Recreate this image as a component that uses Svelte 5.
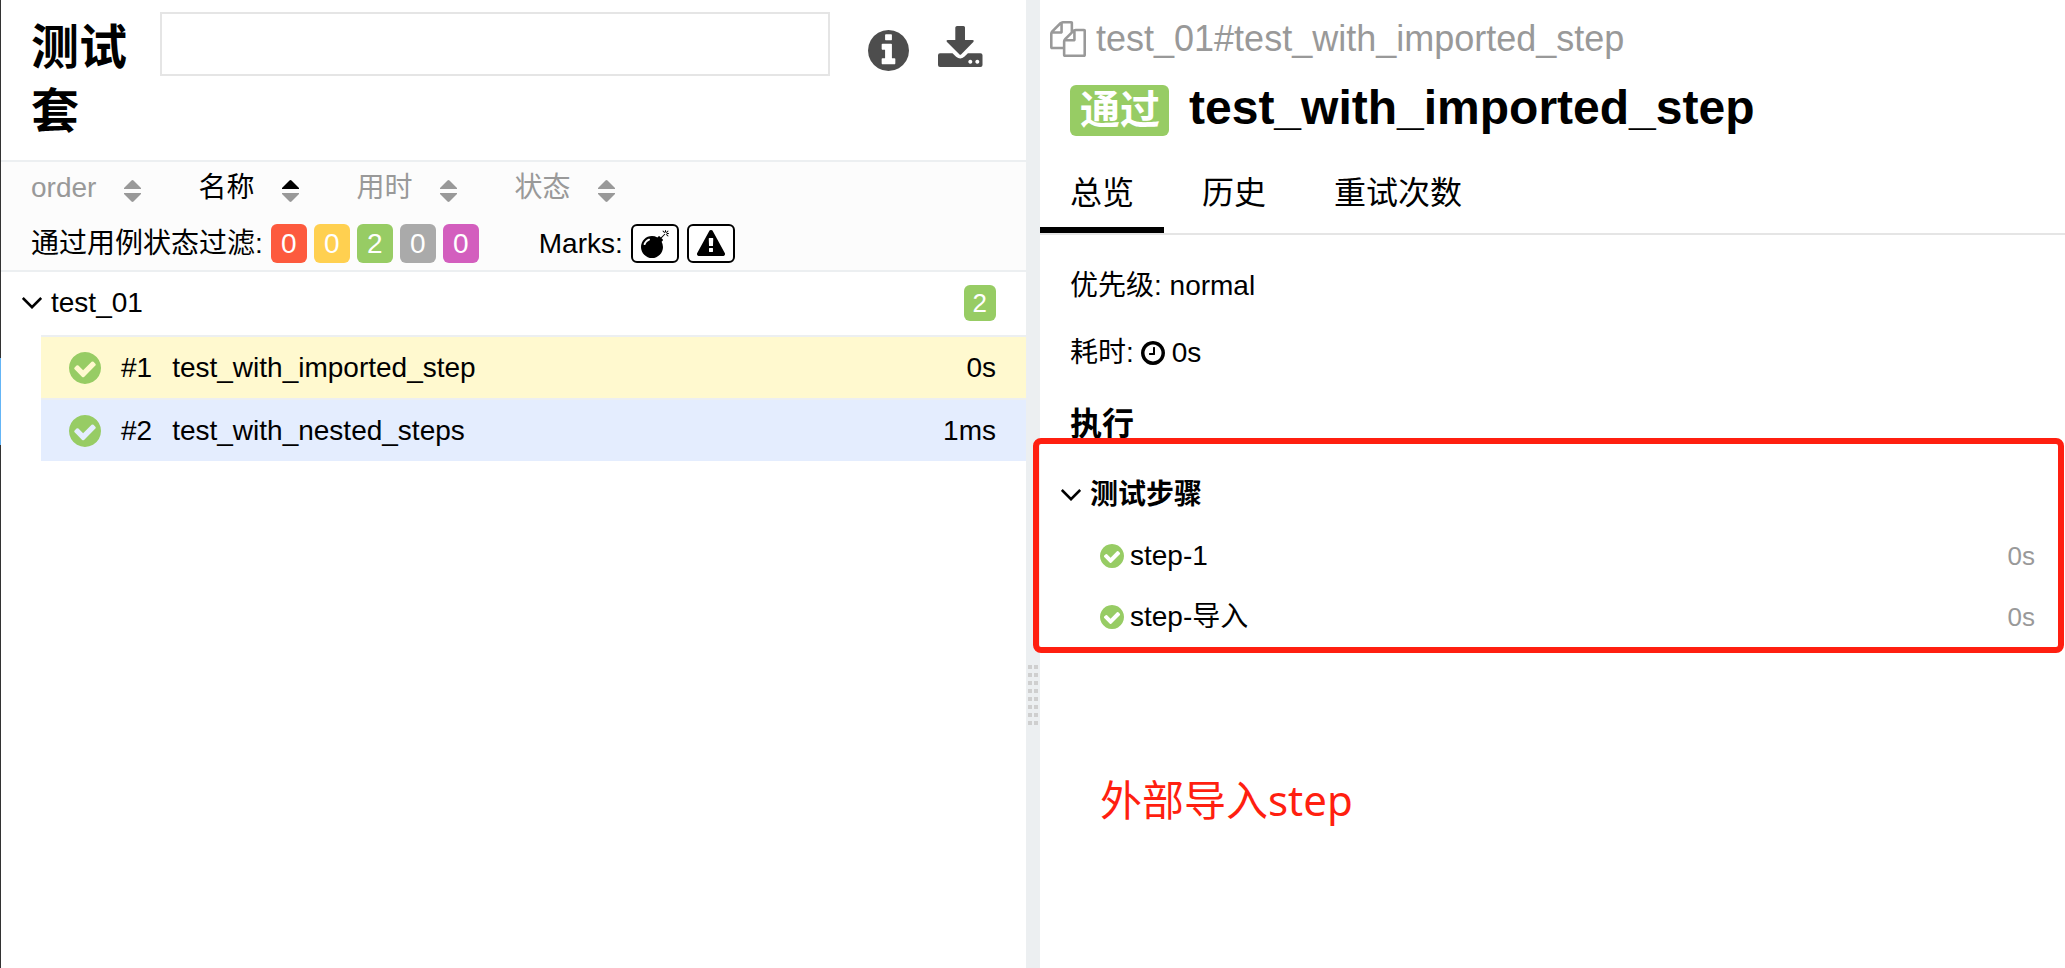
<script>
	const CIRCLE = 'q0 209-103 385.5t-279.5 279.5-385.5 103-385.5-103-279.5-279.5-103-385.5 103-385.5 279.5-279.5 385.5-103 385.5 103 279.5 279.5 103 385.5z';

	const icons = {
		info: 'M1152 1376v-160q0-14-9-23t-23-9h-96v-512q0-14-9-23t-23-9h-320q-14 0-23 9t-9 23v160q0 14 9 23t23 9h96v320h-96q-14 0-23 9t-9 23v160q0 14 9 23t23 9h448q14 0 23-9t9-23zm-128-896v-160q0-14-9-23t-23-9h-192q-14 0-23 9t-9 23v160q0 14 9 23t23 9h192q14 0 23-9t9-23zm640 416' + CIRCLE,
		check: 'M1412 734q0-28-18-46l-91-90q-19-19-45-19t-45 19l-408 407-226-226q-19-19-45-19t-45 19l-91 90q-18 18-18 46 0 27 18 45l362 362q19 19 45 19 27 0 46-19l543-543q18-18 18-45zm252 162' + CIRCLE,
		clock: 'M1024 544v448q0 14-9 23t-23 9h-320q-14 0-23-9t-9-23v-64q0-14 9-23t23-9h224v-352q0-14 9-23t23-9h64q14 0 23 9t9 23zm416 352q0-148-73-273t-198-198-273-73-273 73-198 198-73 273 73 273 198 198 273 73 273-73 198-198 73-273zm224 0' + CIRCLE,
		copy: 'M1696 384q40 0 68 28t28 68v1216q0 40-28 68t-68 28h-960q-40 0-68-28t-28-68v-288h-544q-40 0-68-28t-28-68v-672q0-40 20-88t48-76l408-408q28-28 76-48t88-20h416q40 0 68 28t28 68v328q68-40 128-40h416zm-544 213l-299 299h299v-299zm-640-384l-299 299h299v-299zm196 647l316-316v-416h-384v416q0 40-28 68t-68 28h-416v640h512v-256q0-40 20-88t48-76zm956 804v-1152h-384v416q0 40-28 68t-68 28h-416v640h896z'
	};

	const marks = [
		{
			label: 'flaky',
			path: 'M571 589q-10-25-34-35t-49 0q-108 44-191 127t-127 191q-10 25 0 49t35 34q13 5 24 5 42 0 60-40 34-84 98.5-148.5t148.5-98.5q25-11 35-35t0-49zm942-356l46 46-244 243 68 68q19 19 19 45.5t-19 45.5l-64 64q89 161 89 343 0 143-55.5 273.5t-150 225-225 150-273.5 55.5-273.5-55.5-225-150-150-225-55.5-273.5 55.5-273.5 150-225 225-150 273.5-55.5q182 0 343 89l64-64q19-19 45.5-19t45.5 19l68 68zm8-56q-10 10-22 10-13 0-23-10l-91-90q-9-10-9-23t9-23q10-9 23-9t23 9l90 91q10 9 10 22.5t-10 22.5zm230 230q-11 9-23 9t-23-9l-90-91q-10-9-10-22.5t10-22.5q9-10 22.5-10t22.5 10l91 90q9 10 9 23t-9 23zm41-183q0 14-9 23t-23 9h-96q-14 0-23-9t-9-23 9-23 23-9h96q14 0 23 9t9 23zm-192-192v96q0 14-9 23t-23 9-23-9-9-23v-96q0-14 9-23t23-9 23 9 9 23zm151 55l-91 90q-10 10-22 10-13 0-23-10-10-9-10-22.5t10-22.5l90-91q10-9 23-9t23 9q9 10 9 23t-9 23z'
		},
		{
			label: 'new failed',
			path: 'M1024 1375v-190q0-14-9.5-23.5t-22.5-9.5h-192q-13 0-22.5 9.5t-9.5 23.5v190q0 14 9.5 23.5t22.5 9.5h192q13 0 22.5-9.5t9.5-23.5zm-2-374l18-459q0-12-10-19-13-11-24-11h-220q-11 0-24 11-10 7-10 21l17 457q0 10 10 16.5t24 6.5h185q14 0 23.5-6.5t10.5-16.5zm-14-934l768 1408q35 63-2 126-17 29-46.5 46t-63.5 17h-1536q-34 0-63.5-17t-46.5-46q-37-63-2-126l768-1408q17-31 47-49t65-18 65 18 47 49z'
		}
	];

	const sorters = ['order', '名称', '用时', '状态'];
	const statuses = [
		{ name: 'failed', count: 0 },
		{ name: 'broken', count: 0 },
		{ name: 'passed', count: 2 },
		{ name: 'skipped', count: 0 },
		{ name: 'unknown', count: 0 }
	];
	const tests = [
		{ order: 1, name: 'test_with_imported_step', time: '0s' },
		{ order: 2, name: 'test_with_nested_steps', time: '1ms' }
	];
	const tabs = ['总览', '历史', '重试次数'];
	const steps = [
		{ name: 'step-1', time: '0s' },
		{ name: 'step-导入', time: '0s' }
	];

	let query = $state('');
	let sortBy = $state('名称');
	let selected = $state(1);
	let activeTab = $state('总览');
</script>

{#snippet icon(path, cls)}
	<svg class={cls} viewBox="128 128 1536 1536" fill="currentColor" aria-hidden="true"><path d={path} /></svg>
{/snippet}

{#snippet chevron()}
	<svg class="chevron" viewBox="0 0 20 12" fill="none" stroke="currentColor" stroke-width="2.6" aria-hidden="true">
		<path d="M0.8 1l9.2 9.2L19.2 1" />
	</svg>
{/snippet}

<main class="report">
	<div class="edge"></div>

	<section class="pane">
		<header class="suites-header">
			<h1>测试套</h1>
			<input type="text" aria-label="搜索" bind:value={query} />
			<div class="tools">
				<button aria-label="info">{@render icon(icons.info, 'info')}</button>
				<button aria-label="download">
					<svg class="download" viewBox="0 0 45 48" fill="currentColor" aria-hidden="true">
						<path d="M19 0h6.500q1.500 0 1.500 1.500V14h7.500q2 .3 .8 1.900L23.300 28.300q-1 1-2 0L9 15.900q-1.200-1.600 .8-1.900h7.500V1.500Q17.500 0 19 0z" />
						<path fill-rule="evenodd" d="M2 27.200h12.500l3.600 3.600q4.200 3.400 8.200 0l3.600-3.600H42.500q2 0 2 2V39q0 2-2 2H2q-2 0-2-2V29.200q0-2 2-2zM32.300 33.800a2 2 0 1 0 .01 0zM39.300 33.800a2 2 0 1 0 .01 0z" />
					</svg>
				</button>
			</div>
		</header>

		<div class="controls">
			<div class="sorters">
				{#each sorters as name}
					<button class="sorter" class:active={sortBy === name} onclick={() => (sortBy = name)}>
						{name}
						<svg class="arrows" viewBox="0 0 17 22" aria-hidden="true">
							<path class="up" d="M0 9v-1L7.500 .4q1-.8 2 0L17 8v1z" />
							<path d="M0 13v1l7.500 7.600q1 .8 2 0L17 14v-1z" />
						</svg>
					</button>
				{/each}
			</div>
			<div class="filters">
				<div class="filter">
					<span>通过用例状态过滤:</span>
					<div class="chips">
						{#each statuses as s}
							<button class="chip {s.name}">{s.count}</button>
						{/each}
					</div>
				</div>
				<div class="filter">
					<span>Marks:</span>
					{#each marks as mark}
						<button class="mark" aria-label={mark.label}>
							<svg viewBox="0 0 1792 1792" fill="currentColor" aria-hidden="true"><path d={mark.path} /></svg>
						</button>
					{/each}
				</div>
			</div>
		</div>

		<div class="group">
			<button class="group-name">
				{@render chevron()}
				<span>test_01</span>
			</button>
			<span class="badge">2</span>
		</div>
		<div class="tests">
			{#each tests as test}
				<a
					href="#test-{test.order}"
					class="test"
					class:selected={selected === test.order}
					onclick={() => (selected = test.order)}
				>
					{@render icon(icons.check, 'check')}
					<span>#{test.order}</span>
					<span class="test-name">{test.name}</span>
					<span>{test.time}</span>
				</a>
			{/each}
		</div>
	</section>

	<div class="gutter"><div class="grip"></div></div>

	<section class="pane">
		<div class="full-name">
			<svg class="copy" viewBox="0 0 1792 1792" fill="currentColor" aria-hidden="true"><path d={icons.copy} /></svg>
			<span>test_01#test_with_imported_step</span>
		</div>
		<h2 class="title">
			<span class="status">通过</span>
			<span>test_with_imported_step</span>
		</h2>
		<nav class="tabs">
			{#each tabs as tab}
				<button class="tab" class:active={activeTab === tab} onclick={() => (activeTab = tab)}>{tab}</button>
			{/each}
		</nav>

		<div class="overview">
			<div class="property">优先级: normal</div>
			<div class="property">耗时: {@render icon(icons.clock, 'small')} 0s</div>
			<h3>执行</h3>
		</div>
		<div class="execution">
			<button class="stage">
				{@render chevron()}
				<span>测试步骤</span>
			</button>
			{#each steps as step}
				<div class="step">
					{@render icon(icons.check, 'small passed-icon')}
					<span class="step-name">{step.name}</span>
					<span class="step-time">{step.time}</span>
				</div>
			{/each}
			<div class="frame"></div>
		</div>
		<p class="note">外部导入step</p>
	</section>
</main>

<style>
	:global(body) {
		background: #fff;
	}

	.report {
		display: grid;
		grid-template-columns: 1px minmax(0, 1fr) 14px minmax(0, 1fr);
		min-height: 100vh;
		font-family: 'Liberation Sans', Arial, 'Noto Sans CJK SC', sans-serif;
		font-size: 28px;
		line-height: 36px;
		color: #000;
	}

	button {
		display: flex;
		align-items: center;
		margin: 0;
		padding: 0;
		border: 0;
		background: none;
		font: inherit;
		color: inherit;
		cursor: pointer;
	}

	h1,
	h2,
	h3,
	p {
		margin: 0;
	}

	svg {
		flex: none;
	}

	.edge {
		background: linear-gradient(#333 37%, #64b5f6 37% 46%, #333 46%);
	}

	/* Suites */
	.suites-header {
		display: flex;
		align-items: flex-start;
		padding: 12px 43px 16px 30px;
	}

	h1 {
		width: 100px;
		margin-right: 29px;
		padding-top: 4px;
		font-size: 48px;
		line-height: 64px;
	}

	input {
		flex: 1;
		min-width: 0;
		height: 64px;
		box-sizing: border-box;
		padding: 0 16px;
		border: 2px solid #e5e5e5;
		font: inherit;
		outline: none;
	}

	.tools {
		display: flex;
		gap: 29px;
		margin: 14px 0 0 38px;
		color: #4d4d4d;
	}

	.info {
		width: 41px;
		height: 41px;
	}

	.download {
		width: 45px;
		height: 48px;
	}

	.controls {
		padding: 8px 30px 7px;
		border: solid #eceff1;
		border-width: 2px 0;
		background: #fcfcfc;
	}

	.sorters {
		display: flex;
		gap: 57px;
		margin-bottom: 18px;
	}

	.sorter {
		gap: 28px;
		color: #999;
	}

	.sorter.active {
		color: #000;
	}

	.arrows {
		width: 17px;
		height: 22px;
		margin-top: 6px;
		fill: #999;
	}

	.active .up {
		fill: #000;
	}

	.filters {
		display: flex;
		gap: 60px;
	}

	.filter {
		display: flex;
		align-items: center;
		gap: 8px;
	}

	.chips {
		display: flex;
		gap: 7px;
	}

	.chip,
	.mark {
		justify-content: center;
		width: 36px;
		height: 39px;
		border-radius: 6px;
		color: #fff;
	}

	.mark {
		box-sizing: border-box;
		width: 48px;
		border: 2px solid #000;
		background: #fff;
		color: #000;
	}

	.mark svg {
		width: 28px;
		height: 28px;
	}

	.failed {
		background: #fd5a3e;
	}

	.broken {
		background: #ffd050;
	}

	.passed {
		background: #97cc64;
	}

	.skipped {
		background: #aaa;
	}

	.unknown {
		background: #d35ebe;
	}

	.group {
		display: flex;
		align-items: center;
		justify-content: space-between;
		height: 62px;
		padding: 0 30px 1px 21px;
	}

	.group-name,
	.stage {
		gap: 9px;
	}

	.chevron {
		width: 20px;
		height: 12px;
	}

	.badge {
		padding: 0 9px;
		border-radius: 6px;
		background: #97cc64;
		font-size: 26px;
		color: #fff;
	}

	.tests {
		margin-left: 40px;
	}

	.test {
		display: flex;
		align-items: center;
		gap: 20px;
		padding: 13px 30px 12px 28px;
		border-top: 2px solid #eceff1;
		background: #e4edfe;
		color: inherit;
		text-decoration: none;
	}

	.test.selected {
		background: #fff9cf;
	}

	.test-name,
	.step-name {
		flex: 1;
	}

	.check {
		width: 32px;
		height: 32px;
		color: #97cc64;
	}

	/* Splitter */
	.gutter {
		padding: 665px 2px 0;
		background: #eceff1;
	}

	.grip {
		height: 60px;
		background:
			linear-gradient(90deg, transparent 4px, #eceff1 4px 6px, transparent 6px),
			repeating-linear-gradient(#cfcfcf 0 4px, #eceff1 4px 8px);
	}

	/* Test result */
	.full-name {
		display: flex;
		align-items: center;
		gap: 10px;
		padding: 15px 10px 0;
		font-size: 36px;
		line-height: 48px;
		color: #999;
	}

	.copy {
		width: 36px;
		height: 36px;
	}

	.title {
		display: flex;
		align-items: flex-end;
		gap: 20px;
		padding: 17px 30px;
		font-size: 48px;
		line-height: 56px;
	}

	.status {
		padding: 0 9px 0 10px;
		border-radius: 6px;
		background: #97cc64;
		font-size: 40px;
		line-height: 51px;
		color: #fff;
	}

	.tabs {
		display: flex;
		gap: 8px;
		border-bottom: 2px solid #e5e5e5;
	}

	.tab {
		padding: 20px 30px 14px;
		border-bottom: 6px solid transparent;
		font-size: 32px;
		line-height: 40px;
	}

	.tab.active {
		border-color: #000;
	}

	.overview {
		padding: 33px 30px 31px;
	}

	.property {
		display: flex;
		align-items: center;
		gap: 7px;
		margin-bottom: 31px;
	}

	.small {
		width: 24px;
		height: 24px;
	}

	h3 {
		font-size: 32px;
		line-height: 44px;
	}

	.execution {
		position: relative;
	}

	.stage {
		margin-bottom: 13px;
		padding-left: 21px;
		font-weight: bold;
	}

	.step {
		display: flex;
		align-items: center;
		gap: 6px;
		padding: 12px 30px 13px 60px;
	}

	.passed-icon {
		color: #97cc64;
	}

	.step-time {
		font-size: 26px;
		color: #999;
	}

	.frame {
		position: absolute;
		inset: -39px 1px -5px -7px;
		border: 6px solid #ff1f10;
		border-radius: 8px;
		pointer-events: none;
	}

	.note {
		padding: 122px 30px 0 60px;
		font-family: 'Noto Sans', 'Noto Sans CJK SC', sans-serif;
		font-size: 42px;
		line-height: 60px;
		color: #ff1f10;
	}
</style>
